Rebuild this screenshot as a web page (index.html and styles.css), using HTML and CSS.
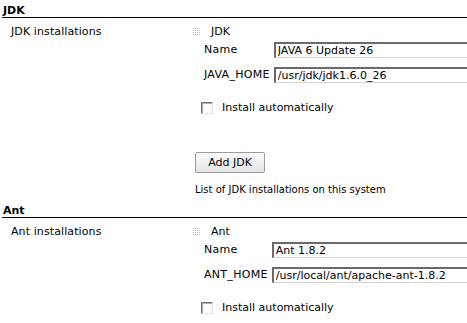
FILE: index.html
```html
<!DOCTYPE html>
<html lang="en">

<head>
    <meta charset="UTF-8" />
    <title>Configure System</title>
    <link rel="stylesheet" href="styles.css">
</head>

<body>
    <div class="page">

        <!-- JDK -->
        <div class="section">
            <div class="section-header">JDK</div>
            <div class="entry">
                <div class="entry-label">JDK installations</div>
                <div class="entry-body">
                    <div class="repeated">
                        <div class="repeated-title">
                            <svg class="grip" width="7" height="7" viewBox="0 0 7 7">
                                <path d="M0 0h1v1H0zM2 0h1v1H2zM4 0h1v1H4zM6 0h1v1H6zM0 2h1v1H0zM2 2h1v1H2zM4 2h1v1H4zM6 2h1v1H6zM0 4h1v1H0zM2 4h1v1H2zM4 4h1v1H4zM6 4h1v1H6zM0 6h1v1H0zM2 6h1v1H2zM4 6h1v1H4zM6 6h1v1H6z" fill="#b8b8b8" />
                            </svg>
                            <span>JDK</span>
                        </div>
                        <div class="fields">
                            <label class="field-label">Name</label>
                            <input class="field-input" type="text" value="JAVA 6 Update 26">
                            <label class="field-label">JAVA_HOME</label>
                            <input class="field-input" type="text" value="/usr/jdk/jdk1.6.0_26">
                        </div>
                        <label class="auto"><input class="check" type="checkbox"> Install automatically</label>
                    </div>
                    <button class="add-btn">Add JDK</button>
                    <div class="help">List of JDK installations on this system</div>
                </div>
            </div>
        </div>

        <!-- Ant -->
        <div class="section">
            <div class="section-header">Ant</div>
            <div class="entry">
                <div class="entry-label">Ant installations</div>
                <div class="entry-body">
                    <div class="repeated">
                        <div class="repeated-title">
                            <svg class="grip" width="7" height="7" viewBox="0 0 7 7">
                                <path d="M0 0h1v1H0zM2 0h1v1H2zM4 0h1v1H4zM6 0h1v1H6zM0 2h1v1H0zM2 2h1v1H2zM4 2h1v1H4zM6 2h1v1H6zM0 4h1v1H0zM2 4h1v1H2zM4 4h1v1H4zM6 4h1v1H6zM0 6h1v1H0zM2 6h1v1H2zM4 6h1v1H4zM6 6h1v1H6z" fill="#b8b8b8" />
                            </svg>
                            <span>Ant</span>
                        </div>
                        <div class="fields">
                            <label class="field-label">Name</label>
                            <input class="field-input" type="text" value="Ant 1.8.2">
                            <label class="field-label">ANT_HOME</label>
                            <input class="field-input" type="text" value="/usr/local/ant/apache-ant-1.8.2">
                        </div>
                        <label class="auto"><input class="check" type="checkbox"> Install automatically</label>
                    </div>
                </div>
            </div>
        </div>

    </div>
</body>

</html>
```

FILE: styles.css
```css
body {
    font-family: 'DejaVu Sans', Verdana, sans-serif;
    font-size: 11px;
    line-height: 13px;
    color: #000;
    background-color: white;
    margin: 0;
    padding: 0;
    overflow: hidden;
}

.page {
    width: 540px;
    padding-top: 4px;
}

.section-header {
    font-weight: bold;
    margin-left: 2px;
    padding-left: 1px;
    border-bottom: 1px solid #000;
}

.entry {
    display: grid;
    grid-template-columns: 193px 1fr;
    padding-top: 7px;
}

.entry-label {
    padding-left: 11px;
    letter-spacing: 0.1px;
}

.repeated-title {
    display: flex;
    align-items: center;
    gap: 11px;
}

.fields {
    display: grid;
    grid-template-columns: auto 1fr;
    column-gap: 4px;
    row-gap: 9px;
    margin-top: 4px;
    padding-left: 11px;
}

.field-label {
    padding-top: 1px;
    letter-spacing: 0.3px;
}

.field-input {
    font-family: inherit;
    font-size: 11px;
    height: 16px;
    margin: 0;
    padding: 0 2px;
    box-sizing: border-box;
    border-style: solid;
    border-width: 2px 1px 1px 2px;
    border-color: #6a6a6a #d4d4d4 #d4d4d4 #6a6a6a;
    background: white;
    color: #000;
    width: 100%;
}

.auto {
    display: flex;
    align-items: center;
    gap: 9px;
    margin-top: 18px;
    padding-left: 8px;
}

.check {
    appearance: none;
    width: 12px;
    height: 12px;
    margin: 0;
    border-style: solid;
    border-width: 1px;
    border-color: #707070 #e0e0e0 #e0e0e0 #707070;
    box-shadow: inset 1px 1px 0 #b0b0b0;
    background: white;
}

.add-btn {
    display: block;
    margin-top: 38px;
    margin-left: 2px;
    width: 70px;
    height: 21px;
    font-family: inherit;
    font-size: 11px;
    color: #000;
    background: linear-gradient(#fdfdfd, #e4e4e4);
    border: 1px solid #9a9a9a;
    border-radius: 2px;
    padding: 0;
}

.help {
    font-size: 10px;
    margin-top: 10px;
    margin-left: 2px;
    padding-bottom: 8px;
}
```
